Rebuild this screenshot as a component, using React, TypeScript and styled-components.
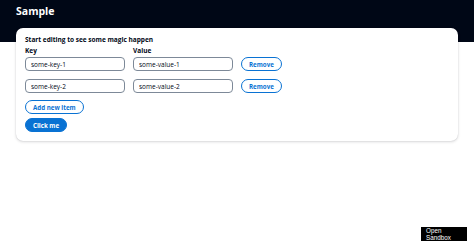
import styled, { createGlobalStyle } from 'styled-components';

const GlobalStyle = createGlobalStyle`
  html, body {
    margin: 0;
    padding: 0;
  }
  body {
    font-family: 'Open Sans', 'Noto Sans', sans-serif;
    color: #000716;
    background: linear-gradient(#000716 0, #000716 42px, #ffffff 42px);
    min-height: 248px;
  }
`;

const Page = styled.div`
  padding: 0 16px;
`;

const Title = styled.h1`
  margin: 0;
  height: 28px;
  padding-top: 4px;
  box-sizing: border-box;
  font-size: 10.5px;
  line-height: 14px;
  font-weight: 700;
  color: #ffffff;
`;

const Card = styled.section`
  background: #ffffff;
  border-radius: 7px;
  box-shadow: 0 1px 3px rgba(0, 7, 22, 0.15), 0 0 1px rgba(0, 7, 22, 0.2);
  padding: 7px 10px 9px 9px;
`;

const CardHeader = styled.h2`
  margin: 0 0 2px;
  font-size: 6.5px;
  line-height: 9px;
  font-weight: 700;
`;

const Form = styled.div`
  display: grid;
  grid-template-columns: 100px 100px auto;
  column-gap: 8px;
  row-gap: 8px;
  align-items: center;
  justify-items: start;
`;

const Label = styled.label`
  font-size: 6.5px;
  line-height: 9px;
  font-weight: 700;
  margin-bottom: -6px;
  align-self: end;
`;

const Input = styled.input`
  width: 100%;
  height: 14px;
  box-sizing: border-box;
  border: 1px solid #7d8998;
  border-radius: 4px;
  padding: 0 5px;
  font-family: inherit;
  font-size: 6.5px;
  color: #000716;
  background: #ffffff;
  outline: none;
`;

const Button = styled.button<{ $primary?: boolean }>`
  height: 14px;
  box-sizing: border-box;
  border-radius: 10px;
  border: 1px solid #0972d3;
  background: ${(p) => (p.$primary ? '#0972d3' : '#ffffff')};
  color: ${(p) => (p.$primary ? '#ffffff' : '#0972d3')};
  font-family: inherit;
  font-size: 6.2px;
  font-weight: 700;
  padding: 0 7px;
  cursor: pointer;
`;

const Actions = styled.div`
  display: flex;
  flex-direction: column;
  align-items: flex-start;
  gap: 4px;
  margin-top: 7px;
`;

const SandboxBadge = styled.a`
  position: fixed;
  right: 7px;
  bottom: 7px;
  width: 46px;
  height: 14px;
  box-sizing: border-box;
  padding: 0 5px;
  background: #000000;
  color: #ffffff;
  font-family: 'Liberation Sans', sans-serif;
  font-size: 6.3px;
  line-height: 7px;
  text-decoration: none;
`;

const items = [
  { key: 'some-key-1', value: 'some-value-1' },
  { key: 'some-key-2', value: 'some-value-2' },
];

export default function App() {
  return (
    <>
      <GlobalStyle />
      <Page>
        <Title>Sample</Title>
        <Card>
          <CardHeader>Start editing to see some magic happen</CardHeader>
          <Form>
            <Label>Key</Label>
            <Label>Value</Label>
            <span />
            {items.map((item) => (
              <>
                <Input defaultValue={item.key} />
                <Input defaultValue={item.value} />
                <Button>Remove</Button>
              </>
            ))}
          </Form>
          <Actions>
            <Button>Add new item</Button>
            <Button $primary>Click me</Button>
          </Actions>
        </Card>
      </Page>
      <SandboxBadge href="#">
        Open
        <br />
        Sandbox
      </SandboxBadge>
    </>
  );
}
